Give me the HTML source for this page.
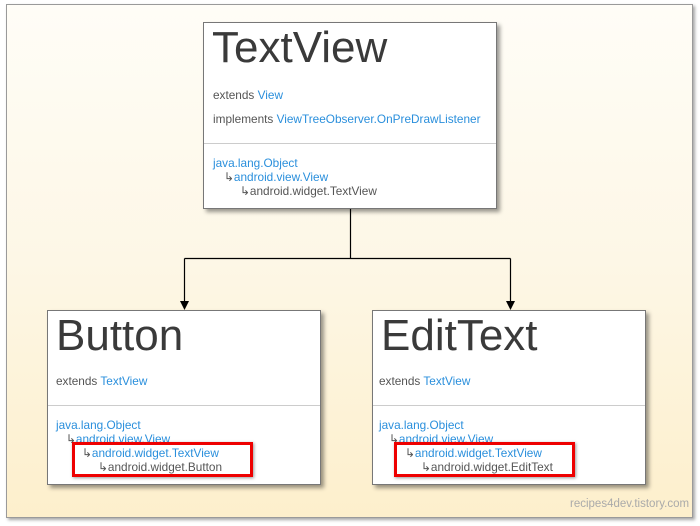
<!DOCTYPE html>
<html><head><style>
*{margin:0;padding:0;box-sizing:border-box}
body{width:700px;height:526px;background:#fff;position:relative;overflow:hidden;font-family:"Liberation Sans",sans-serif}
.frame{position:absolute;left:6px;top:4px;width:687px;height:514px;border:1px solid #9a9a9a;background:linear-gradient(#fffdf7,#fdf7e6 50%,#fdefcc);box-shadow:2px 2px 3px rgba(0,0,0,.35)}
.box{position:absolute;background:#fff;border:1px solid #777;box-shadow:3px 3px 4px rgba(0,0,0,.4);font-size:11.8px;color:#555}
.t{font-size:44px;font-weight:300;color:#3a3a3a;position:absolute;left:8px;top:0px;letter-spacing:0}
.a{color:#2a8fdc}
.l{position:absolute;left:0;right:0;border-top:1px solid #ccc}
.p{position:absolute;white-space:nowrap}
.r{position:absolute;border:3px solid #e00;box-shadow:1px 1px 3px rgba(0,0,0,.4)}
.w{position:absolute;font-size:11.5px;color:#aaa}
</style></head><body>
<div class="frame"></div>
<svg style="position:absolute;left:0;top:0" width="700" height="526">
<g stroke="#000" stroke-width="1.2" fill="none"><path d="M350.5 208V258.5M184.5 258.5H510.5M184.5 258.5V302M510.5 258.5V302"/></g>
<path d="M180 301h9l-4.5 9z M506 301h9l-4.5 9z" fill="#000"/>
</svg>
<div class="box" style="left:203px;top:22px;width:294px;height:187px">
<div class="t">TextView</div>
<div class="p" style="left:9px;top:65px">extends <span class="a">View</span></div>
<div class="p" style="left:9px;top:89px">implements <span class="a">ViewTreeObserver.OnPreDrawListener</span></div>
<div class="l" style="top:120px"></div>
<div class="p" style="left:9px;top:133px"><span class="a">java.lang.Object</span></div>
<div class="p" style="left:20px;top:147px">↳<span class="a">android.view.View</span></div>
<div class="p" style="left:36px;top:161px">↳android.widget.TextView</div>
</div>
<div class="box" style="left:47px;top:310px;width:274px;height:175px">
<div class="t">Button</div>
<div class="p" style="left:8px;top:63px">extends <span class="a">TextView</span></div>
<div class="l" style="top:94px"></div>
<div class="p" style="left:8px;top:107px"><span class="a">java.lang.Object</span></div>
<div class="p" style="left:18px;top:121px">↳<span class="a">android.view.View</span></div>
<div class="p" style="left:34px;top:135px">↳<span class="a">android.widget.TextView</span></div>
<div class="p" style="left:50px;top:149px">↳android.widget.Button</div>
</div>
<div class="box" style="left:372px;top:310px;width:274px;height:175px">
<div class="t">EditText</div>
<div class="p" style="left:6px;top:63px">extends <span class="a">TextView</span></div>
<div class="l" style="top:94px"></div>
<div class="p" style="left:6px;top:107px"><span class="a">java.lang.Object</span></div>
<div class="p" style="left:16px;top:121px">↳<span class="a">android.view.View</span></div>
<div class="p" style="left:32px;top:135px">↳<span class="a">android.widget.TextView</span></div>
<div class="p" style="left:48px;top:149px">↳android.widget.EditText</div>
</div>
<div class="r" style="left:72px;top:442px;width:181px;height:35px"></div>
<div class="r" style="left:394px;top:442px;width:181px;height:35px"></div>
<div class="w" style="left:570px;top:498px">recipes4dev.tistory.com</div>
</body></html>
